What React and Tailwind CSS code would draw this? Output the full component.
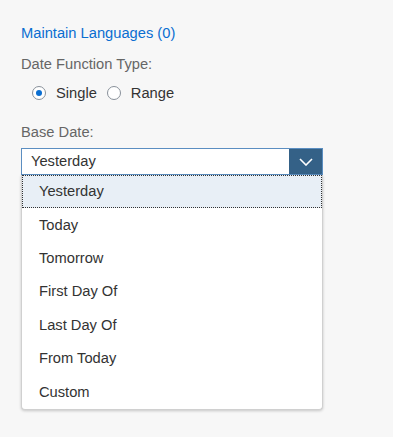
import { useState } from 'react'

const options = ['Yesterday', 'Today', 'Tomorrow', 'First Day Of', 'Last Day Of', 'From Today', 'Custom']

const Radio = ({ checked, label }) => (
  <label className="flex items-center">
    <span className="w-[14px] h-[14px] rounded-full border border-[#89919a] bg-white flex items-center justify-center">
      {checked && <span className="w-[6px] h-[6px] rounded-full bg-[#0a6ed1]" />}
    </span>
    <span className="ml-[10px] text-[#333]">{label}</span>
  </label>
)

const App = () => {
  const [value] = useState('Yesterday')

  return (
    <div className="w-[393px] h-[437px] bg-[#f7f7f7] text-[14.7px] pl-[21px] pt-[25px] font-['Liberation_Sans',Arial,sans-serif]">
      <a className="block text-[#0a6ed1] leading-[16px]">Maintain Languages (0)</a>

      <div className="mt-[15px] text-[#666] leading-[16px]">Date Function Type:</div>
      <div className="mt-[13px] ml-[11px] flex items-center gap-[10px] leading-[16px]">
        <Radio checked label="Single" />
        <Radio label="Range" />
      </div>

      <div className="mt-[23px] text-[#666] leading-[16px]">Base Date:</div>
      <div className="mt-[8px] w-[302px]">
        <div className="flex h-[27px] border border-[#5b8ec1] bg-white">
          <div className="flex-1 flex items-center pl-[9px] text-[#333]">{value}</div>
          <div className="w-[33px] bg-[#346187] flex items-center justify-center">
            <svg width="14" height="8" viewBox="0 0 14 8" fill="none">
              <path d="M1 1l6 6 6-6" stroke="#fff" strokeWidth="1.6" />
            </svg>
          </div>
        </div>
        <div className="bg-white rounded-b-[4px] border border-[#d0d0d0] border-t-0 shadow-[0_1px_3px_rgba(0,0,0,0.2)] pb-[1px]">
          {options.map((o, i) => (
            <div
              key={o}
              className={
                i === 0
                  ? 'h-[33px] flex items-center pl-[16px] text-[#333] bg-[#e8eff6] border border-dotted border-[#333]'
                  : 'h-[33.4px] flex items-center pl-[17px] text-[#333]'
              }
            >
              {o}
            </div>
          ))}
        </div>
      </div>
    </div>
  )
}

export default App
